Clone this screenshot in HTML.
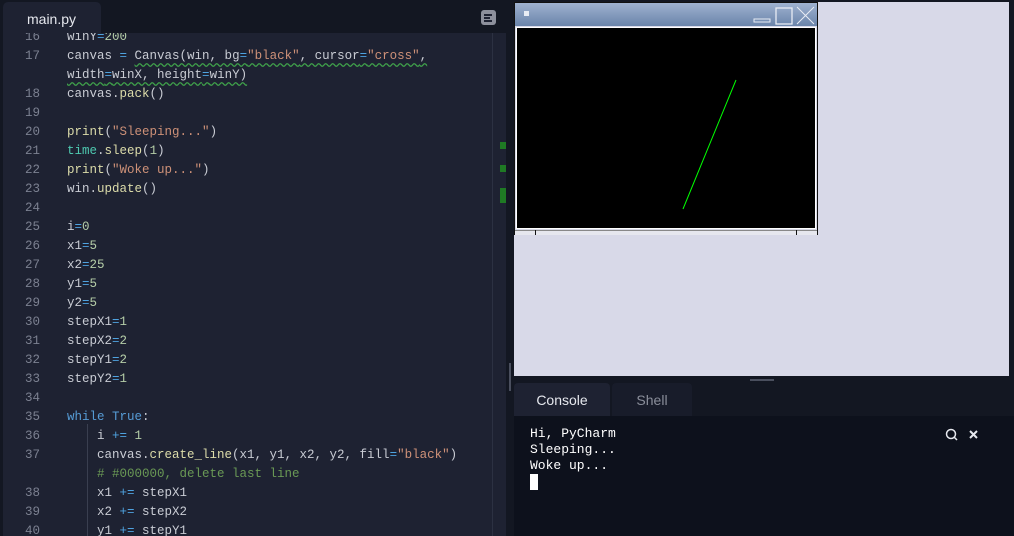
<!DOCTYPE html>
<html><head><style>
*{margin:0;padding:0;box-sizing:border-box}
body{width:1014px;height:536px;background:#131722;position:relative;overflow:hidden;font-family:"Liberation Sans",sans-serif}
.ed{position:absolute;left:3px;top:33px;width:503px;height:503px;background:#1e2232;overflow:hidden}
.tab{position:absolute;left:3px;top:2px;width:98px;height:31px;background:#1e2232;border-radius:5px 5px 0 0;color:#e6e8ee;font-size:14px;padding:9px 0 0 24px}
.ln{position:absolute;left:0;width:37px;text-align:right;color:#7c8191;font:12.5px/19px "Liberation Mono",monospace}
.cd{position:absolute;left:64px;color:#c9ccd4;font:12.5px/19px "Liberation Mono",monospace;white-space:pre}
.o{color:#4fa3e0}.n{color:#b5cea8}.s{color:#ce9178}.f{color:#dcdcaa}.t{color:#4ec9b0}.k{color:#569cd6}.c{color:#6a9955}
.w{text-decoration:underline wavy #3fa14a;text-underline-offset:3px}
.guide{position:absolute;left:84px;top:391px;width:1px;height:120px;background:#3a3f50}
.vsep{position:absolute;left:489px;top:0;width:1px;height:503px;background:#2c3142}
.mk{position:absolute;left:497px;width:9px;background:#1f7a24}
.right{position:absolute;left:514px;top:2px;width:495px;height:374px;background:#d8d9e8}
.win{position:absolute;left:514px;top:2px;width:304px;height:233px;background:#d8d9e8;border:1px solid #111}
.title{position:absolute;left:0;top:0;width:302px;height:23px;background:linear-gradient(#9fb2d0,#6a84aa)}
.cv{position:absolute;left:1px;top:24px;width:300px;height:202px;background:#000;border:1px solid #fff}
.ctab{position:absolute;top:383px;height:33px;font-size:14px;text-align:center;padding-top:9px;border-radius:4px 4px 0 0}
.con{position:absolute;left:514px;top:416px;width:500px;height:120px;background:#0d111c}
.ct{position:absolute;left:530px;color:#fff;font:13px/16px "Liberation Mono",monospace;white-space:pre}
.L{position:absolute;left:0;top:1px;width:503px;height:503px}
</style></head><body>
<div class="tab">main.py</div>
<div style="position:absolute;left:481px;top:10px;width:15px;height:15px;background:#8d909c;border-radius:3px"><div style="position:absolute;left:3px;top:4px;width:8px;height:1.5px;background:#1e2232"></div><div style="position:absolute;left:3px;top:7px;width:6px;height:1.5px;background:#1e2232"></div><div style="position:absolute;left:3px;top:10px;width:8px;height:1.5px;background:#1e2232"></div></div>
<div class="ed">
<div class="vsep"></div>
<div class="mk" style="top:109px;height:7px"></div>
<div class="mk" style="top:132px;height:7px"></div>
<div class="mk" style="top:155px;height:15px"></div>
<div class="guide"></div>
<div class="L">
<div class="ln" style="top:-6px">16</div><div class="cd" style="top:-6px">winY<span class="o">=</span><span class="n">200</span></div>
<div class="ln" style="top:13px">17</div><div class="cd" style="top:13px">canvas <span class="o">=</span> <span class="w">Canvas(win, bg<span class="o">=</span><span class="s">"black"</span>, cursor<span class="o">=</span><span class="s">"cross"</span>,</span></div>
<div class="cd" style="top:32px"><span class="w">width<span class="o">=</span>winX, height<span class="o">=</span>winY)</span></div>
<div class="ln" style="top:51px">18</div><div class="cd" style="top:51px">canvas.<span class="f">pack</span>()</div>
<div class="ln" style="top:70px">19</div>
<div class="ln" style="top:89px">20</div><div class="cd" style="top:89px"><span class="f">print</span>(<span class="s">"Sleeping..."</span>)</div>
<div class="ln" style="top:108px">21</div><div class="cd" style="top:108px"><span class="t">time</span>.<span class="f">sleep</span>(<span class="n">1</span>)</div>
<div class="ln" style="top:127px">22</div><div class="cd" style="top:127px"><span class="f">print</span>(<span class="s">"Woke up..."</span>)</div>
<div class="ln" style="top:146px">23</div><div class="cd" style="top:146px">win.<span class="f">update</span>()</div>
<div class="ln" style="top:165px">24</div>
<div class="ln" style="top:184px">25</div><div class="cd" style="top:184px">i<span class="o">=</span><span class="n">0</span></div>
<div class="ln" style="top:203px">26</div><div class="cd" style="top:203px">x1<span class="o">=</span><span class="n">5</span></div>
<div class="ln" style="top:222px">27</div><div class="cd" style="top:222px">x2<span class="o">=</span><span class="n">25</span></div>
<div class="ln" style="top:241px">28</div><div class="cd" style="top:241px">y1<span class="o">=</span><span class="n">5</span></div>
<div class="ln" style="top:260px">29</div><div class="cd" style="top:260px">y2<span class="o">=</span><span class="n">5</span></div>
<div class="ln" style="top:279px">30</div><div class="cd" style="top:279px">stepX1<span class="o">=</span><span class="n">1</span></div>
<div class="ln" style="top:298px">31</div><div class="cd" style="top:298px">stepX2<span class="o">=</span><span class="n">2</span></div>
<div class="ln" style="top:317px">32</div><div class="cd" style="top:317px">stepY1<span class="o">=</span><span class="n">2</span></div>
<div class="ln" style="top:336px">33</div><div class="cd" style="top:336px">stepY2<span class="o">=</span><span class="n">1</span></div>
<div class="ln" style="top:355px">34</div>
<div class="ln" style="top:374px">35</div><div class="cd" style="top:374px"><span class="k">while</span> <span class="k">True</span>:</div>
<div class="ln" style="top:393px">36</div><div class="cd" style="top:393px">    i <span class="o">+=</span> <span class="n">1</span></div>
<div class="ln" style="top:412px">37</div><div class="cd" style="top:412px">    canvas.<span class="f">create_line</span>(x1, y1, x2, y2, fill<span class="o">=</span><span class="s">"black"</span>)</div>
<div class="cd" style="top:431px">    <span class="c"># #000000, delete last line</span></div>
<div class="ln" style="top:450px">38</div><div class="cd" style="top:450px">    x1 <span class="o">+=</span> stepX1</div>
<div class="ln" style="top:469px">39</div><div class="cd" style="top:469px">    x2 <span class="o">+=</span> stepX2</div>
<div class="ln" style="top:488px">40</div><div class="cd" style="top:488px">    y1 <span class="o">+=</span> stepY1</div>
</div>
</div>
<div style="position:absolute;left:509px;top:363px;width:2px;height:28px;background:#4a4f5e"></div>
<div class="right"></div>
<div class="win">
<div class="title"><div style="position:absolute;left:9px;top:8px;width:5px;height:5px;background:#e8ecf4"></div>
<svg style="position:absolute;left:237px;top:0" width="64" height="22"><rect x="2" y="16" width="16" height="3" fill="none" stroke="#e8ecf4"/><rect x="24" y="5" width="16" height="16" fill="none" stroke="#e8ecf4" stroke-width="1.3"/><path d="M45 4L62 21M62 4L45 21" stroke="#e8ecf4"/></svg></div>
<div class="cv"><svg width="300" height="202"><line x1="219" y1="52" x2="166" y2="181" stroke="#0f0" stroke-width="1"/></svg></div>
<div style="position:absolute;left:0;top:227px;width:302px;height:5px;border-top:1px solid #888;background:#e6e7ee"></div>
<div style="position:absolute;left:20px;top:227px;width:1px;height:5px;background:#111"></div>
<div style="position:absolute;left:281px;top:227px;width:1px;height:5px;background:#111"></div>
</div>
<div style="position:absolute;left:750px;top:379px;width:24px;height:2px;background:#4a4f5e"></div>
<div class="ctab" style="left:514px;width:96px;background:#1e2232;color:#e6e8ee">Console</div>
<div class="ctab" style="left:612px;width:80px;background:#181c2a;color:#8a8e9a">Shell</div>
<div class="con"></div>
<div class="ct" style="top:426px">Hi, PyCharm</div>
<div class="ct" style="top:442px">Sleeping...</div>
<div class="ct" style="top:458px">Woke up...</div>
<div style="position:absolute;left:530px;top:474px;width:8px;height:16px;background:#fff"></div>
<svg style="position:absolute;left:944px;top:427px" width="36" height="16"><circle cx="7" cy="7" r="4.5" fill="none" stroke="#e6e8ee" stroke-width="1.5"/><path d="M10 10L13 13" stroke="#e6e8ee" stroke-width="1.5"/><path d="M26 4L33 11M33 4L26 11" stroke="#e6e8ee" stroke-width="2"/></svg>
</body></html>
